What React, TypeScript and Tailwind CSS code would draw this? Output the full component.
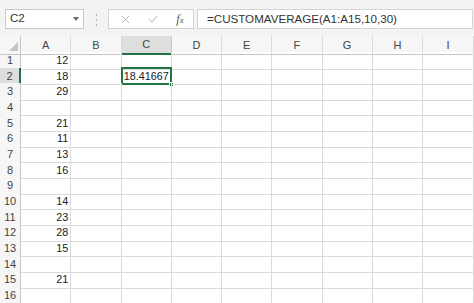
const COLS = ['A', 'B', 'C', 'D', 'E', 'F', 'G', 'H', 'I']

const COL_A: Record<number, string> = {
  1: '12',
  2: '18',
  3: '29',
  5: '21',
  6: '11',
  7: '13',
  8: '16',
  10: '14',
  11: '23',
  12: '28',
  13: '15',
  15: '21',
}

const ROWS = Array.from({ length: 16 }, (_, i) => i + 1)

function Toolbar() {
  return (
    <div className="flex h-[36px] items-start bg-[#f3f3f3] pl-[5px] pt-[9px]">
      {/* name box */}
      <div className="flex h-[20px] w-[79px] items-center justify-between border border-[#c8c8c8] bg-white pl-[4px] pr-[4px]">
        <span className="text-[11.5px] text-[#333]">C2</span>
        <svg width="6" height="4" viewBox="0 0 6 4">
          <path d="M0 0 L6 0 L3 4 Z" fill="#6b6b6b" />
        </svg>
      </div>
      <div className="flex w-[24px] flex-col items-center gap-[3px] pt-[5px]">
        <span className="h-[2px] w-[1px] bg-[#b5b5b5]" />
        <span className="h-[2px] w-[1px] bg-[#b5b5b5]" />
        <span className="h-[2px] w-[1px] bg-[#b5b5b5]" />
      </div>
      {/* cancel / enter / fx */}
      <div className="flex h-[20px] w-[86px] items-center border border-[#d4d4d4] bg-white">
        <div className="flex w-[30px] justify-center pl-[2px]">
          <svg width="9" height="9" viewBox="0 0 9 9">
            <path d="M1 1 L8 8 M8 1 L1 8" stroke="#b4b4b4" strokeWidth="1" />
          </svg>
        </div>
        <div className="flex w-[28px] justify-center">
          <svg width="10" height="8" viewBox="0 0 10 8">
            <path d="M1 4 L4 7 L9 1" stroke="#b4b4b4" strokeWidth="1" fill="none" />
          </svg>
        </div>
        <div className="flex w-[26px] justify-center">
          <span className="font-['Liberation_Serif',serif] text-[12px] italic text-[#555]">
            f<span className="text-[9px]">x</span>
          </span>
        </div>
      </div>
      <div className="ml-[3px] mr-[1px] flex h-[20px] flex-1 items-center border border-[#d4d4d4] bg-white pl-[9px]">
        <span className="text-[11.6px] text-[#333]">=CUSTOMAVERAGE(A1:A15,10,30)</span>
      </div>
    </div>
  )
}

function HeaderRow() {
  return (
    <div className="grid h-[16px] grid-cols-[21px_repeat(8,50.25px)_1fr] bg-[#f6f6f6]">
      <div className="relative border-b border-r border-[#c6c6c6]">
        <svg className="absolute bottom-[3px] right-[2px]" width="9" height="9" viewBox="0 0 9 9">
          <path d="M9 0 L9 9 L0 9 Z" fill="#c4c4c4" />
        </svg>
      </div>
      {COLS.map((c) =>
        c === 'C' ? (
          <div
            key={c}
            className="flex items-center justify-center border-b-2 border-r border-b-[#217346] border-r-[#c6c6c6] bg-[#dedede] text-[11px] text-[#444]"
          >
            {c}
          </div>
        ) : (
          <div
            key={c}
            className="flex items-center justify-center border-b border-r border-b-[#c6c6c6] border-r-[#dadada] text-[11px] text-[#444]"
          >
            {c}
          </div>
        ),
      )}
    </div>
  )
}

function DataRow({ n }: { n: number }) {
  const active = n === 2
  return (
    <div className="grid h-[15.67px] grid-cols-[21px_repeat(8,50.25px)_1fr]">
      <div
        className={
          active
            ? 'flex items-center justify-center border-b border-r-2 border-b-[#d4d4d4] border-r-[#217346] bg-[#dedede] text-[11px] text-[#444]'
            : 'flex items-center justify-center border-b border-r border-[#c6c6c6] bg-[#f6f6f6] text-[11px] text-[#444]'
        }
      >
        {n}
      </div>
      {COLS.map((c) => (
        <div
          key={c}
          className="relative flex items-center justify-end border-b border-r border-[#dadada] pr-[2px] text-[10.8px] text-[#1a1a1a]"
        >
          {c === 'A' && COL_A[n]}
          {c === 'C' && active && (
            <>
              <div className="pointer-events-none absolute -left-[1px] -top-[1px] h-[calc(100%+2px)] w-[calc(100%+2px)] border-2 border-[#217346]" />
              <div className="absolute -bottom-[3px] -right-[3px] h-[5px] w-[5px] border border-white bg-[#217346]" />
              <span className="relative">18.41667</span>
            </>
          )}
        </div>
      ))}
    </div>
  )
}

export default function App() {
  return (
    <div className="h-[303px] w-[474px] overflow-hidden bg-white font-['Liberation_Sans',Arial,sans-serif]">
      <Toolbar />
      <HeaderRow />
      {ROWS.map((n) => (
        <DataRow key={n} n={n} />
      ))}
    </div>
  )
}
